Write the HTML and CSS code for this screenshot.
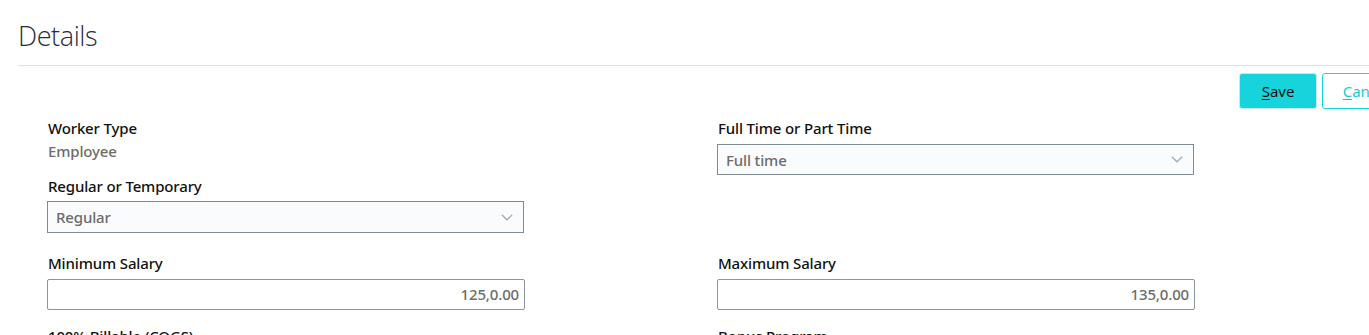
FILE: index.html
```html
<!DOCTYPE html>
<html>
<head>
<meta charset="utf-8">
<link rel="stylesheet" href="styles.css">
</head>
<body>
<div class="page">
  <header class="header">
    <h1 class="title">Details</h1>
  </header>
  <div class="toolbar">
    <button class="btn btn-primary"><u>S</u>ave</button>
    <button class="btn btn-outline"><u>C</u>ancel</button>
  </div>
  <div class="form">
    <div class="row row-1">
      <div class="col">
        <div class="field field-readonly">
          <div class="label">Worker Type</div>
          <div class="value">Employee</div>
        </div>
        <div class="field field-regular">
          <div class="label">Regular or Temporary</div>
          <div class="select select-tall">
            <span class="select-text">Regular</span>
            <svg class="chevron" width="12" height="7" viewBox="0 0 12 7"><path d="M0.8 0.8 L6 5.8 L11.2 0.8" fill="none" stroke="#a3a9ae" stroke-width="1.2"/></svg>
          </div>
        </div>
      </div>
      <div class="col">
        <div class="field">
          <div class="label">Full Time or Part Time</div>
          <div class="select">
            <span class="select-text">Full time</span>
            <svg class="chevron" width="12" height="7" viewBox="0 0 12 7"><path d="M0.8 0.8 L6 5.8 L11.2 0.8" fill="none" stroke="#a3a9ae" stroke-width="1.2"/></svg>
          </div>
        </div>
      </div>
    </div>
    <div class="row row-2">
      <div class="col">
        <div class="field">
          <div class="label">Minimum Salary</div>
          <div class="input">125,0.00</div>
        </div>
      </div>
      <div class="col">
        <div class="field">
          <div class="label">Maximum Salary</div>
          <div class="input">135,0.00</div>
        </div>
      </div>
    </div>
    <div class="row row-3">
      <div class="col">
        <div class="field">
          <div class="label">100% Billable (COGS)</div>
        </div>
      </div>
      <div class="col">
        <div class="field">
          <div class="label">Bonus Program</div>
        </div>
      </div>
    </div>
  </div>
</div>
</body>
</html>
```

FILE: styles.css
```css
html, body {
  margin: 0;
  padding: 0;
  overflow: hidden;
  background: #ffffff;
}

body {
  font-family: "Noto Sans", "Open Sans", "Liberation Sans", sans-serif;
  color: #1b1b1b;
}

.page {
  width: 1412px;
}

.header {
  margin-left: 18px;
  height: 66px;
  border-bottom: 1px solid #dde2e8;
  box-sizing: border-box;
  padding-top: 16px;
}

.title {
  margin: 0;
  font-family: "Open Sans", "Noto Sans", sans-serif;
  font-weight: 300;
  font-size: 27px;
  line-height: 40px;
  color: #2c2c38;
  letter-spacing: -0.4px;
}

.toolbar {
  display: flex;
  justify-content: flex-end;
  gap: 5px;
  margin-top: 7px;
  padding-right: 2px;
}

.btn {
  height: 36px;
  box-sizing: border-box;
  border-radius: 3px;
  font-family: "Noto Sans", "Open Sans", sans-serif;
  font-size: 15px;
  padding: 0;
  cursor: pointer;
}

.btn u {
  text-underline-offset: 2px;
}

.btn-primary {
  width: 78px;
  background: #17d4dc;
  border: 1px solid #c6e8ea;
  color: #101010;
}

.btn-outline {
  width: 88px;
  background: #ffffff;
  border: 1px solid #17d4dc;
  color: #17c9d2;
}

.form {
  padding-left: 48px;
  margin-top: 9px;
}

.row {
  display: flex;
}

.col {
  width: 670px;
  flex: none;
}

.field {
  width: 477px;
}

.label {
  font-size: 15px;
  line-height: 20px;
  font-weight: 500;
  color: #111111;
  margin-bottom: 6px;
  letter-spacing: -0.15px;
}

.field-readonly .label {
  margin-bottom: 3px;
}

.value {
  font-size: 15px;
  line-height: 20px;
  font-weight: 500;
  color: #6c6c6c;
  letter-spacing: -0.15px;
}

.field-regular {
  margin-top: 15px;
}

.field-regular .label {
  margin-bottom: 5px;
}

.select {
  width: 477px;
  height: 31px;
  margin-left: -1px;
  box-sizing: border-box;
  border: 1px solid #7d8b94;
  background: #fafbfd;
  display: flex;
  align-items: center;
  justify-content: space-between;
  padding: 0 10px 0 8px;
}

.select-tall {
  height: 32px;
}

.select-text {
  font-size: 15px;
  font-weight: 500;
  color: #6c6c6c;
  letter-spacing: -0.15px;
}

.chevron {
  display: block;
}

.input {
  height: 31px;
  margin-left: -1px;
  width: 478px;
  box-sizing: border-box;
  border: 1px solid #8a959c;
  border-radius: 2px;
  background: #ffffff;
  text-align: right;
  font-size: 15px;
  line-height: 29px;
  font-weight: 500;
  color: #6c6c6c;
  padding-right: 5px;
  letter-spacing: -0.15px;
}

.row-2 {
  margin-top: 20px;
}

.row-3 {
  margin-top: 16px;
}
```
